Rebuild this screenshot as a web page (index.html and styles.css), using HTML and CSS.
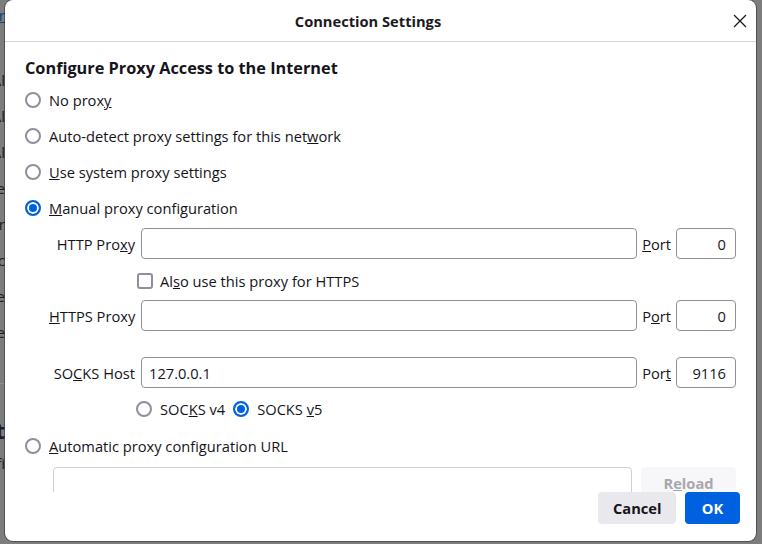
FILE: index.html
```html
<!DOCTYPE html>
<html>
<head>
<meta charset="utf-8">
<title>Connection Settings</title>
<link rel="stylesheet" href="styles.css">
</head>
<body>
<div class="page">
  <div class="page-edge">
    <div class="pe-top"><span class="pe-link">Your</span></div>
    <div class="pe-line">Al</div>
    <div class="pe-line">Al</div>
    <div class="pe-line">Al</div>
    <div class="pe-line">Use</div>
    <div class="pe-line">Mor</div>
    <div class="pe-line">Sync</div>
    <div class="pe-line">Use</div>
    <div class="pe-line">Use</div>
    <div class="pe-sep"></div>
    <div class="pe-head">Net</div>
    <div class="pe-line">Confi</div>
  </div>
</div>

<div class="dialog">
  <header class="dlg-head">
    <div class="dlg-title">Connection Settings</div>
    <button class="dlg-close" aria-label="Close">
      <svg width="14" height="14" viewBox="0 0 14 14"><path d="M1 1L13 13M13 1L1 13" stroke="#1b1b1f" stroke-width="1.25" fill="none"/></svg>
    </button>
  </header>

  <div class="dlg-body">
    <h1 class="section-title">Configure Proxy Access to the Internet</h1>

    <div class="choice"><span class="radio"></span><span>No prox<u>y</u></span></div>
    <div class="choice"><span class="radio"></span><span>Auto-detect proxy settings for this net<u>w</u>ork</span></div>
    <div class="choice"><span class="radio"></span><span><u>U</u>se system proxy settings</span></div>
    <div class="choice"><span class="radio on"></span><span><u>M</u>anual proxy configuration</span></div>

    <div class="manual">
      <div class="field-row">
        <span class="field-label">HTTP Pro<u>x</u>y</span>
        <input class="text-input" type="text" value="">
        <span class="port-label"><u>P</u>ort</span>
        <input class="text-input port-input" type="text" value="0">
      </div>
      <div class="check-row">
        <span class="check"></span><span>Al<u>s</u>o use this proxy for HTTPS</span>
      </div>
      <div class="field-row https-row">
        <span class="field-label"><u>H</u>TTPS Proxy</span>
        <input class="text-input" type="text" value="">
        <span class="port-label">P<u>o</u>rt</span>
        <input class="text-input port-input" type="text" value="0">
      </div>
      <div class="field-row socks-row">
        <span class="field-label">SO<u>C</u>KS Host</span>
        <input class="text-input" type="text" value="127.0.0.1">
        <span class="port-label">Por<u>t</u></span>
        <input class="text-input port-input" type="text" value="9116">
      </div>
      <div class="socks-versions">
        <span class="radio"></span><span class="sv-text">SOC<u>K</u>S v4</span>
        <span class="radio on"></span><span>SOCKS <u>v</u>5</span>
      </div>
    </div>

    <div class="choice auto-choice"><span class="radio"></span><span><u>A</u>utomatic proxy configuration URL</span></div>
    <div class="url-row">
      <input class="text-input url-input" type="text" value="" disabled>
      <button class="btn reload" disabled>R<u>e</u>load</button>
    </div>
  </div>

  <footer class="dlg-foot">
    <button class="btn cancel">Cancel</button>
    <button class="btn primary">OK</button>
  </footer>
</div>
</body>
</html>
```

FILE: styles.css
```css
* {
  box-sizing: border-box;
}

html,
body {
  margin: 0;
  padding: 0;
}

body {
  position: relative;
  width: 762px;
  height: 544px;
  overflow: hidden;
  background: #7d7d7d;
  font-family: "Open Sans", "Noto Sans", sans-serif;
  font-size: 14.67px;
  color: #15141a;
}

/* dimmed page behind the dialog */
.page {
  height: 544px;
}

.page-edge {
  width: 5px;
  overflow: hidden;
  display: flex;
  flex-direction: column;
  color: #1c1b1f;
  font-size: 15px;
}

.pe-top {
  height: 30px;
  flex: none;
  display: flex;
  align-items: center;
  justify-content: flex-end;
  white-space: nowrap;
  margin-bottom: 32px;
}

.pe-link {
  color: #0b3f8a;
  text-decoration: underline;
}

.pe-line {
  height: 36px;
  flex: none;
  display: flex;
  align-items: center;
  justify-content: flex-end;
  white-space: nowrap;
}

.pe-sep {
  height: 1px;
  flex: none;
  margin-top: 33px;
  background: #8e8e8e;
}

.pe-head {
  height: 30px;
  flex: none;
  margin-top: 31px;
  display: flex;
  align-items: center;
  justify-content: flex-end;
  white-space: nowrap;
  font-size: 22px;
  font-weight: 700;
}

/* dialog */
.dialog {
  position: absolute;
  left: 5px;
  top: 0;
  width: 751px;
  height: 541px;
  background: #ffffff;
  border-radius: 8px;
  box-shadow: 0 0 0 1px rgba(0, 0, 0, 0.35);
  display: flex;
  flex-direction: column;
  overflow: hidden;
}

.dlg-head {
  flex: none;
  height: 42px;
  display: flex;
  align-items: center;
  padding-right: 8px;
  border-bottom: 1px solid #d6d6d6;
}

.dlg-title {
  flex: 1;
  text-align: center;
  font-weight: 700;
  font-size: 14.67px;
  color: #1b1b1f;
}

.dlg-close {
  width: 17px;
  height: 17px;
  padding: 0;
  border: 0;
  background: none;
  display: flex;
  align-items: center;
  justify-content: center;
}

.dlg-body {
  flex: 1;
  min-height: 0;
  overflow: hidden;
  padding: 14px 20px 0 20px;
}

.section-title {
  margin: 0 0 2px 0;
  font-size: 16.3px;
  line-height: 24px;
  font-weight: 700;
}

.choice {
  height: 36px;
  display: flex;
  align-items: center;
  gap: 8px;
  white-space: nowrap;
}

.radio {
  flex: none;
  width: 16px;
  height: 16px;
  border: 2px solid #8f8f9d;
  border-radius: 50%;
  background: #ffffff;
}

.radio.on {
  border-color: #0061e0;
  background: #0061e0;
  box-shadow: inset 0 0 0 2px #ffffff;
}

.check {
  flex: none;
  width: 16px;
  height: 16px;
  border: 2px solid #8f8f9d;
  border-radius: 3px;
  background: #ffffff;
}

.manual {
  margin: 2px 0 0 24px;
}

.field-row {
  height: 31px;
  display: flex;
  align-items: center;
  white-space: nowrap;
}

.https-row {
  margin-top: 11px;
}

.socks-row {
  margin-top: 26px;
}

.field-label {
  flex: none;
  width: 86px;
  margin-right: 6px;
  text-align: right;
}

.text-input {
  flex: 1;
  min-width: 0;
  height: 31px;
  margin: 0;
  padding: 0 7px;
  border: 1px solid #8f8f9d;
  border-radius: 4px;
  background: #ffffff;
  font: inherit;
  color: #15141a;
  outline: none;
}

.port-label {
  flex: none;
  margin: 0 5px;
}

.port-input {
  flex: none;
  width: 60px;
  text-align: right;
  padding-right: 9px;
}

.check-row {
  margin-top: 14px;
  height: 16px;
  padding-left: 88px;
  display: flex;
  align-items: center;
  gap: 7px;
  white-space: nowrap;
}

.socks-versions {
  margin-top: 13px;
  height: 16px;
  padding-left: 87px;
  display: flex;
  align-items: center;
  gap: 8px;
  white-space: nowrap;
}

.auto-choice {
  margin-top: 11px;
}

.url-row {
  margin: 3px 0 0 28px;
  display: flex;
  align-items: flex-start;
  gap: 9px;
}

.url-input {
  height: 32px;
  border-color: #cfcfd8;
}

.btn {
  font: inherit;
  font-weight: 700;
  border: 0;
  border-radius: 4px;
  height: 32px;
  padding: 0 15px;
  margin: 0;
  color: #15141a;
  background: #e9e9ed;
}

.reload {
  flex: none;
  width: 95px;
  background: #f7f7f9;
  color: #a7a7ab;
}

.dlg-foot {
  flex: none;
  height: 49px;
  display: flex;
  justify-content: flex-end;
  align-items: flex-start;
  gap: 9px;
  padding-right: 16px;
}

.cancel {
  width: 78px;
}

.primary {
  width: 55px;
  background: #0061e0;
  color: #ffffff;
}
```
